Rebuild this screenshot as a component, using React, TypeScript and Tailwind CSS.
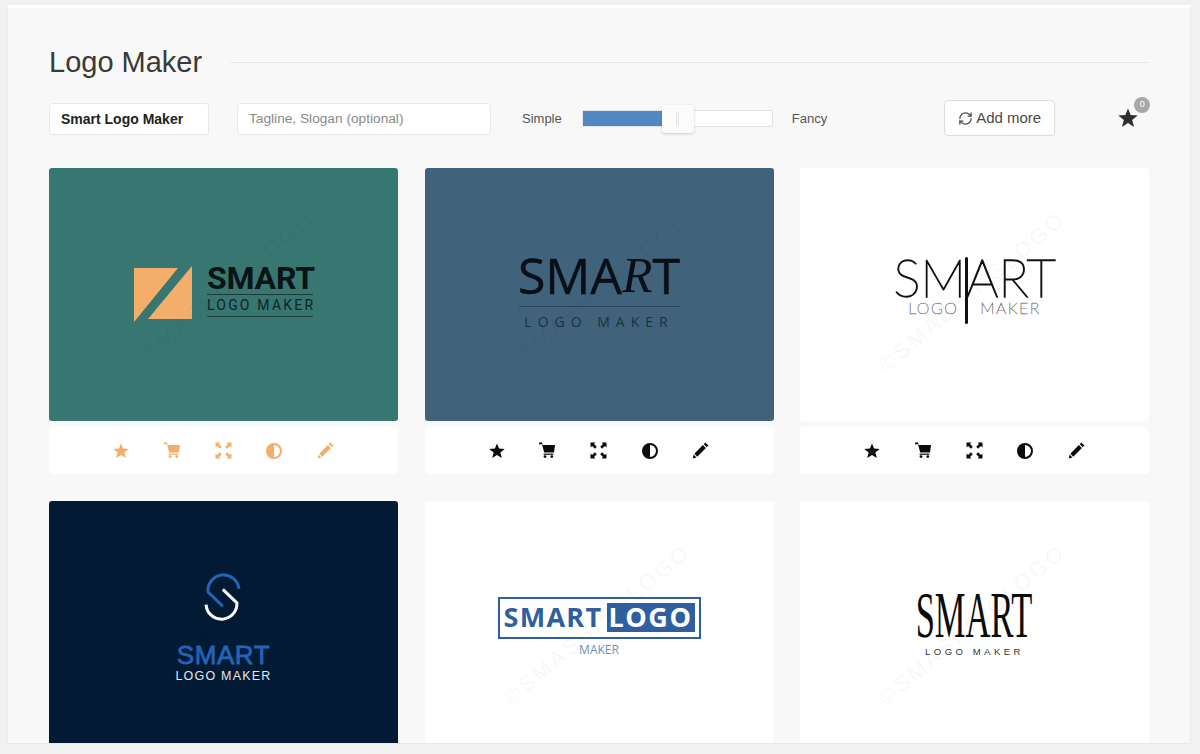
import { RefreshCw } from "lucide-react";

function StarIcon({ size = 16 }: { size?: number }) {
  return (
    <svg width={size} height={size} viewBox="0 0 20 20" fill="currentColor">
      <polygon points="10,0.5 12.6,7 19.7,7.4 14.2,11.9 16,18.9 10,15 4,18.9 5.8,11.9 0.3,7.4 7.4,7" />
    </svg>
  );
}

function CartIcon() {
  return (
    <svg width="16" height="17" viewBox="0 0 16 17" fill="currentColor">
      <path d="M0 0.5h3l0.7 2.5H16l-1 7.6H5.2L3 2.3H0z" />
      <rect x="4.6" y="11.6" width="9.6" height="1.2" />
      <circle cx="6" cy="14.6" r="1.4" />
      <circle cx="12.8" cy="14.6" r="1.4" />
    </svg>
  );
}

function ExpandIcon() {
  return (
    <svg width="17" height="17" viewBox="0 0 17 17" fill="currentColor">
      <path d="M0.5 0.5h5L4 2l2.8 2.8-1.9 1.9L2.1 3.9 0.5 5.5z" />
      <path d="M16.5 0.5v5L14.9 3.9l-2.8 2.8-1.9-1.9L13 2l-1.5-1.5z" />
      <path d="M0.5 16.5v-5l1.6 1.6 2.8-2.8 1.9 1.9L4 15l1.5 1.5z" />
      <path d="M16.5 16.5h-5L13 15l-2.8-2.8 1.9-1.9 2.8 2.8 1.6-1.6z" />
    </svg>
  );
}

function ContrastIcon() {
  return (
    <svg width="16" height="16" viewBox="0 0 16 16">
      <circle cx="8" cy="8" r="7" fill="none" stroke="currentColor" strokeWidth="2" />
      <path d="M8 1a7 7 0 0 0 0 14z" fill="currentColor" />
    </svg>
  );
}

function PencilIcon() {
  return (
    <svg width="17" height="17" viewBox="0 0 17 17" fill="currentColor">
      <path d="M13.4 0.6l3 3-1.6 1.6-3-3z" />
      <path d="M10.9 3.1l3 3-8.6 8.6-3-3z" />
      <path d="M1.6 12.6l2.8 2.8-3.7 1z" />
    </svg>
  );
}

function Watermark() {
  return (
    <div className="absolute inset-0 flex items-center justify-center overflow-hidden pointer-events-none">
      <span className="-rotate-[40deg] -translate-x-[2px] -translate-y-[3px] whitespace-nowrap text-[22px] tracking-[3px] text-black/[0.05] font-['Liberation_Sans',sans-serif]">
        ©SMASHINGLOGO
      </span>
    </div>
  );
}

function Card({
  bg,
  iconColor,
  children,
}: {
  bg: string;
  iconColor: string;
  children: React.ReactNode;
}) {
  return (
    <div>
      <div
        className={`relative h-[253px] rounded-[3px] flex items-center justify-center overflow-hidden ${bg}`}
      >
        {children}
        <Watermark />
      </div>
      <div
        className={`mt-[6px] h-[47px] bg-white rounded-[4px] flex items-center justify-center gap-[34.6px] ${iconColor}`}
      >
        <StarIcon />
        <CartIcon />
        <ExpandIcon />
        <ContrastIcon />
        <PencilIcon />
      </div>
    </div>
  );
}

function LogoOne() {
  return (
    <div className="flex items-center gap-[15px] -mt-[1px]">
      <svg width="58" height="57" viewBox="0 0 58 57" fill="#f4ae6a">
        <polygon points="0,2 44,2 0,56" />
        <polygon points="58,0 58,53 14,53" />
      </svg>
      <div className="w-[106px] mb-[8px] text-[#0a1414]">
        <div className="h-[28px] flex items-center text-[32px] leading-[28px] font-bold -tracking-[0.2px] font-['Roboto',sans-serif] whitespace-nowrap">
          SMART
        </div>
        <div className="mt-[2px] border-y border-[#1c3a3a] h-[23px] flex items-center text-[14px] leading-[20px] tracking-[2.2px] whitespace-nowrap font-['Roboto',sans-serif] text-[#102525]">
          LOGO MAKER
        </div>
      </div>
    </div>
  );
}

function LogoTwo() {
  return (
    <div className="w-[161px] text-[#090f18] -mt-[1px]">
      <div className="h-[48px] text-[50px] leading-[34px] font-medium whitespace-nowrap font-['Open_Sans',sans-serif] flex justify-center [-webkit-text-stroke:0.5px_#090f18]">
        SMA
        <span className="font-['Liberation_Serif',serif] italic font-light [-webkit-text-stroke:0px]">R</span>T
      </div>
      <div className="border-t border-[#2b4458] pt-[6px] flex justify-center text-[14px] leading-[18px] tracking-[6px] whitespace-nowrap text-[#1c3242] font-['Open_Sans',sans-serif]">
        LOGO MAKER
      </div>
    </div>
  );
}

function LogoThree() {
  return (
    <div className="relative w-[162px] h-[68px] text-[#111] -mt-[7px]">
      <div className="text-center text-[51px] leading-[42px] font-thin whitespace-nowrap font-['Lato',sans-serif] [-webkit-text-stroke:1.3px_#111]">
        SMART
      </div>
      <div className="flex justify-center gap-[22px] text-[16px] leading-[18px] tracking-[1.5px] text-[#777] font-thin font-['Lato',sans-serif] [-webkit-text-stroke:0.5px_#777]">
        <span>LOGO</span>
        <span>MAKER</span>
      </div>
      <div className="absolute left-[71px] top-0 w-[3px] h-[67px] rounded-full bg-[#111]" />
    </div>
  );
}

function LogoFour() {
  return (
    <div className="flex flex-col items-center">
      <svg width="42" height="52" viewBox="160 35 125 155" fill="none" strokeWidth="9">
        <path d="M222 140 L178 98 A46 46 0 1 1 270 88" stroke="#2264b8" />
        <path d="M222 90 L264 130 A46 46 0 1 1 172 135" stroke="#ffffff" />
      </svg>
      <div className="mt-[19px] text-[26px] leading-[26px] tracking-[0.6px] font-['Liberation_Sans',sans-serif] text-[#2264b8] [-webkit-text-stroke:0.8px_#2264b8]">
        SMART
      </div>
      <div className="text-[12.5px] leading-[16px] tracking-[1.2px] text-[#e4e7ec] font-['Liberation_Sans',sans-serif]">
        LOGO MAKER
      </div>
    </div>
  );
}

function LogoFive() {
  return (
    <div className="flex flex-col items-center -mt-[2px]">
      <div className="w-[203px] h-[42px] border-2 border-[#2f5f9f] flex items-center pl-[4px] pr-[4px] justify-between">
        <span className="text-[27px] font-bold tracking-[1.3px] text-[#2f5f9f] font-['Open_Sans',sans-serif]">
          SMART
        </span>
        <span className="w-[88px] h-[29px] bg-[#2f5f9f] flex items-center justify-center text-[27px] font-bold tracking-[1.6px] text-white font-['Open_Sans',sans-serif]">
          LOGO
        </span>
      </div>
      <div className="mt-[4px] text-[12px] leading-[14px] text-[#6a8fc0] font-['Open_Sans',sans-serif]">
        MAKER
      </div>
    </div>
  );
}

function LogoSix() {
  return (
    <div className="flex flex-col items-center -mt-[5px] text-[#0b0b0b]">
      <div className="text-[65px] leading-[46px] scale-x-[0.53] whitespace-nowrap font-['Liberation_Serif',serif]">
        SMART
      </div>
      <div className="mt-[8px] text-[9.5px] leading-[12px] tracking-[3.5px] text-[#333] font-['Liberation_Sans',sans-serif]">
        LOGO MAKER
      </div>
    </div>
  );
}

export default function App() {
  return (
    <div className="h-[754px] overflow-hidden bg-[#f1f1f1] pl-[7px] pr-[9px] pt-[5px] font-['Liberation_Sans',sans-serif]">
      <div className="h-[739px] bg-[#f8f8f8] border-x border-b border-x-[#ececec] border-b-[#e8e8e8] border-t-[3px] border-t-white pl-[41px] pr-[40px] overflow-hidden">
        <div className="flex items-center gap-[28px] pt-[36px]">
          <h1 className="text-[29px] leading-[36px] text-[#3a3a3a] whitespace-nowrap">Logo Maker</h1>
          <div className="flex-1 h-[1px] bg-[#e6e8ea]" />
        </div>

        <div className="flex items-center mt-[20px] h-[36px]">
          <div className="mt-[1px] w-[160px] h-[32px] bg-white border border-[#e8e8e8] rounded-[3px] flex items-center pl-[11px] pt-[1px] text-[14px] font-bold text-[#222]">
            Smart Logo Maker
          </div>
          <div className="mt-[1px] ml-[28px] w-[254px] h-[32px] bg-white border border-[#e8e8e8] rounded-[3px] flex items-center pl-[11px] pt-[1px] text-[13.7px] text-[#8a8a8a]">
            Tagline, Slogan (optional)
          </div>
          <span className="mt-[2px] ml-[31px] text-[13px] text-[#555]">Simple</span>
          <div className="mt-[1px] relative ml-[20px] w-[191px] h-[17px] bg-white border border-[#dde4ec] rounded-[2px]">
            <div className="h-full w-[80px] bg-[#5289c4]" />
            <div className="absolute left-[79px] -top-[6px] w-[32px] h-[28px] bg-[#fbfbfb] rounded-[3px] shadow-[0_1px_3px_rgba(0,0,0,0.18)] flex items-center justify-center">
              <div className="w-[3px] h-[14px] border-x border-[#e2e2e2]" />
            </div>
          </div>
          <span className="mt-[2px] ml-[19px] text-[13px] text-[#555]">Fancy</span>
          <div className="ml-[117px] w-[111px] h-[36px] bg-white border border-[#dcdcdc] rounded-[4px] flex items-center justify-center gap-[3px] text-[15px] text-[#4a4a4a]">
            <RefreshCw size={15} strokeWidth={2} />
            Add more
          </div>
          <div className="relative ml-[63px] -mt-[1px] text-[#2f2f2f]">
            <StarIcon size={20} />
            <span className="absolute -top-[11px] left-[16px] w-[16px] h-[16px] rounded-full bg-[#a8a8a8] flex items-center justify-center text-[9px] text-white">
              0
            </span>
          </div>
        </div>

        <div className="grid grid-cols-3 gap-x-[26.5px] gap-y-[27px] mt-[32px] mr-[1px]">
          <Card bg="bg-[#387672]" iconColor="text-[#f4ae6a]">
            <LogoOne />
          </Card>
          <Card bg="bg-[#40637b]" iconColor="text-[#0b0b0b]">
            <LogoTwo />
          </Card>
          <Card bg="bg-white" iconColor="text-[#0b0b0b]">
            <LogoThree />
          </Card>
          <Card bg="bg-[#021a33]" iconColor="text-[#0b0b0b]">
            <LogoFour />
          </Card>
          <Card bg="bg-white" iconColor="text-[#0b0b0b]">
            <LogoFive />
          </Card>
          <Card bg="bg-white" iconColor="text-[#0b0b0b]">
            <LogoSix />
          </Card>
        </div>
      </div>
    </div>
  );
}
